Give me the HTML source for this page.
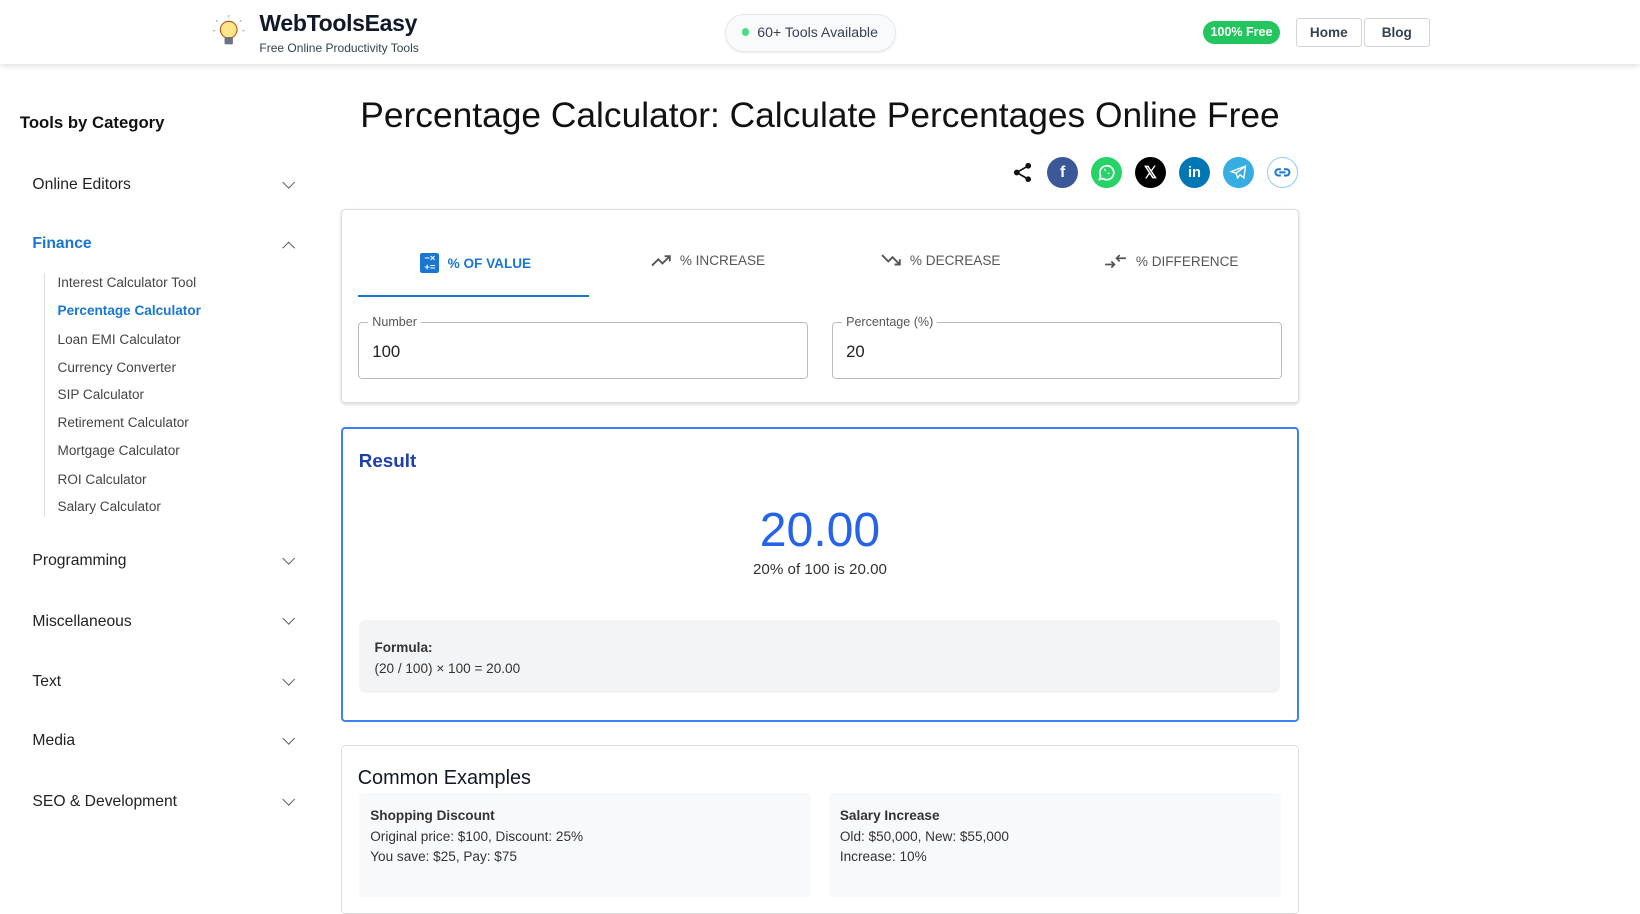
<!DOCTYPE html>
<html><head><meta charset="utf-8">
<style>
html{zoom:1.04592}
body{margin:0;width:1568px;height:818px;overflow:hidden;background:#fff;font-family:"Liberation Sans",Arial,sans-serif;color:#1f2937;position:relative}
.a{position:absolute}
.hdr{left:0;top:0;width:1568px;height:61px;background:#fff;box-shadow:0 2px 6px rgba(0,0,0,.12)}
.chev{width:8px;height:8px;border-right:1.6px solid #555;border-bottom:1.6px solid #555;transform:rotate(45deg)}
.up{transform:rotate(-135deg)}
.cat{left:31px;font-size:15px;color:#222}
.sub{left:55px;font-size:13px;color:#444}
.sic{width:30px;height:30px;border-radius:50%;top:150px;display:flex;align-items:center;justify-content:center;color:#fff;font-weight:bold;font-size:15px}
.card{background:#fff;border:1px solid #ddd;border-radius:4px;box-shadow:0 1px 3px rgba(0,0,0,.15)}
.tab{top:242px;font-size:13px;color:#555;display:flex;align-items:center;gap:8px}
.fld{border:1px solid #bbb;border-radius:4px;height:52px;top:308px}
.fld span{position:absolute;top:-8px;left:9px;background:#fff;padding:0 4px;font-size:12px;color:#555}
.fld div{position:absolute;left:13px;top:18px;font-size:16px;color:#222}
</style></head><body>
<div class="a hdr"></div>
<div class="a" style="left:203px;top:13px;width:32px;height:34px">
<svg width="32" height="34" viewBox="0 0 32 34"><g stroke="#9ca3af" stroke-width="1" stroke-dasharray="2 2"><line x1="16" y1="1" x2="16" y2="5"/><line x1="4" y1="6" x2="7" y2="9"/><line x1="28" y1="6" x2="25" y2="9"/><line x1="1" y1="16" x2="5" y2="16"/><line x1="31" y1="16" x2="27" y2="16"/></g><circle cx="16" cy="15" r="8" fill="#fde68a" stroke="#b45309" stroke-width="1"/><rect x="12" y="22" width="8" height="7" rx="1" fill="#6b7280"/></svg></div>
<div class="a" style="left:248px;top:10px;font-size:22px;font-weight:bold;color:#111827;letter-spacing:-.3px">WebToolsEasy</div>
<div class="a" style="left:248px;top:39px;font-size:11.5px;color:#374151">Free Online Productivity Tools</div>
<div class="a" style="left:693px;top:13px;width:162px;height:35px;border:1px solid #e5e7eb;border-radius:18px;background:#f9fafb;box-shadow:0 1px 2px rgba(0,0,0,.08)"></div>
<div class="a" style="left:709px;top:27px;width:7px;height:7px;border-radius:50%;background:#4ade80"></div>
<div class="a" style="left:724px;top:23px;font-size:13.5px;color:#374151">60+ Tools Available</div>
<div class="a" style="left:1150px;top:20px;width:74px;height:22px;border-radius:11px;background:#22c55e;color:#fff;font-weight:bold;font-size:12px;text-align:center;line-height:22px">100% Free</div>
<div class="a" style="left:1239px;top:17px;width:61px;height:26px;border:1px solid #d1d5db;border-radius:3px;text-align:center;line-height:26px;font-size:13px;font-weight:bold;color:#374151">Home</div>
<div class="a" style="left:1304px;top:17px;width:61px;height:26px;border:1px solid #d1d5db;border-radius:3px;text-align:center;line-height:26px;font-size:13px;font-weight:bold;color:#374151">Blog</div>

<div class="a" style="left:19px;top:108px;font-size:16px;font-weight:bold;color:#111">Tools by Category</div>
<div class="a cat" style="top:168px">Online Editors</div><div class="a chev" style="left:272px;top:170px"></div>
<div class="a cat" style="top:225px;color:#1976d2;font-weight:bold">Finance</div><div class="a chev up" style="left:272px;top:232px"></div>
<div class="a" style="left:42px;top:261px;width:1px;height:233px;background:#ddd"></div>
<div class="a sub" style="top:263px">Interest Calculator Tool</div>
<div class="a sub" style="top:290px;color:#1976d2;font-weight:bold">Percentage Calculator</div>
<div class="a sub" style="top:317px">Loan EMI Calculator</div>
<div class="a sub" style="top:344px">Currency Converter</div>
<div class="a sub" style="top:370px">SIP Calculator</div>
<div class="a sub" style="top:397px">Retirement Calculator</div>
<div class="a sub" style="top:424px">Mortgage Calculator</div>
<div class="a sub" style="top:451px">ROI Calculator</div>
<div class="a sub" style="top:477px">Salary Calculator</div>
<div class="a cat" style="top:528px">Programming</div><div class="a chev" style="left:272px;top:530px"></div>
<div class="a cat" style="top:586px">Miscellaneous</div><div class="a chev" style="left:272px;top:587px"></div>
<div class="a cat" style="top:643px">Text</div><div class="a chev" style="left:272px;top:645px"></div>
<div class="a cat" style="top:700px">Media</div><div class="a chev" style="left:272px;top:702px"></div>
<div class="a cat" style="top:758px">SEO &amp; Development</div><div class="a chev" style="left:272px;top:760px"></div>

<div class="a" style="left:326px;width:916px;top:92px;text-align:center;font-size:33.8px;color:#111">Percentage Calculator: Calculate Percentages Online Free</div>
<svg class="a" style="left:967px;top:154px" width="22" height="22" viewBox="0 0 24 24"><path fill="#111" d="M18 16.08c-.76 0-1.440.3-1.96.77L8.91 12.7c.05-.23.09-.46.09-.7s-.04-.47-.09-.7l7.05-4.11A2.99 2.99 0 1 0 15 5c0 .24.04.47.09.7L8.04 9.81A3 3 0 1 0 8.040 14.2l7.12 4.16c-.05.21-.08.43-.08.65a2.92 2.92 0 1 0 2.92-2.93z"/></svg>
<div class="a sic" style="left:1001px;background:#3b5998">f</div>
<div class="a sic" style="left:1043px;background:#25d366"><svg width="20" height="20" viewBox="0 0 24 24"><path fill="none" stroke="#fff" stroke-width="2" d="M4 20l1.3-4A8 8 0 1 1 8 19z"/><path fill="#fff" d="M9 8c1 3 3 5 6 6l1-1-2-1-1 1c-1-.5-2-1.5-2.5-2.5l1-1-1-2z"/></svg></div>
<div class="a sic" style="left:1085px;background:#000;font-size:16px">𝕏</div>
<div class="a sic" style="left:1127px;background:#0077b5;font-size:14px">in</div>
<div class="a sic" style="left:1169px;background:#37aee2"><svg width="18" height="18" viewBox="0 0 24 24"><path fill="none" stroke="#fff" stroke-width="1.8" d="M21 4L3 11l6 2 2 6 3-4 5 4zM9 13l12-9"/></svg></div>
<div class="a sic" style="left:1211px;background:#fff;border:1px solid #90caf9;width:28px;height:28px"><svg width="18" height="18" viewBox="0 0 24 24"><path fill="none" stroke="#1976d2" stroke-width="2.5" d="M10 8H7a4 4 0 0 0 0 8h3M14 8h3a4 4 0 0 1 0 8h-3M8 12h8"/></svg></div>

<div class="a card" style="left:326px;top:200px;width:914px;height:183px"></div>
<div class="a tab" style="left:402px;color:#1976d2;font-weight:bold"><span style="width:18px;height:18px;background:#1976d2;border-radius:2px;color:#fff;font-size:9px;line-height:8px;text-align:center;display:inline-block;padding-top:1px">−×<br>+=</span>% OF VALUE</div>
<div class="a tab" style="left:622px"><svg width="20" height="14" viewBox="0 0 20 14"><path fill="none" stroke="#555" stroke-width="1.8" d="M1 12l6-6 4 4 7-7M13 3h5v5"/></svg>% INCREASE</div>
<div class="a tab" style="left:842px"><svg width="20" height="14" viewBox="0 0 20 14"><path fill="none" stroke="#555" stroke-width="1.8" d="M1 2l6 6 4-4 7 7M13 11h5V6"/></svg>% DECREASE</div>
<div class="a tab" style="left:1056px"><svg width="22" height="16" viewBox="0 0 22 16"><path fill="none" stroke="#555" stroke-width="1.6" d="M1 11h8M7 8l3 3-3 3M21 5h-8M15 2l-3 3 3 3"/></svg>% DIFFERENCE</div>
<div class="a" style="left:342px;top:282px;width:221px;height:2px;background:#1976d2"></div>
<div class="a fld" style="left:342px;width:429px"><span>Number</span><div>100</div></div>
<div class="a fld" style="left:795px;width:429px"><span>Percentage (%)</span><div>20</div></div>

<div class="a" style="left:326px;top:408px;width:912px;height:278px;border:2px solid #3b82f6;border-radius:4px"></div>
<div class="a" style="left:343px;top:430px;font-size:18px;font-weight:bold;color:#1e40af">Result</div>
<div class="a" style="left:326px;width:916px;top:480px;text-align:center;font-size:46px;color:#2563eb">20.00</div>
<div class="a" style="left:326px;width:916px;top:536px;text-align:center;font-size:14.5px;color:#333">20% of 100 is 20.00</div>
<div class="a" style="left:343px;top:593px;width:881px;height:70px;background:#f3f4f6;border-radius:6px"></div>
<div class="a" style="left:358px;top:612px;font-size:13px;font-weight:bold;color:#333">Formula:</div>
<div class="a" style="left:358px;top:632px;font-size:13px;color:#333">(20 / 100) × 100 = 20.00</div>

<div class="a card" style="left:326px;top:712px;width:914px;height:160px;box-shadow:none"></div>
<div class="a" style="left:342px;top:733px;font-size:19px;color:#111827">Common Examples</div>
<div class="a" style="left:343px;top:758px;width:432px;height:100px;background:#f8f9fb;border-radius:4px"></div>
<div class="a" style="left:793px;top:758px;width:432px;height:100px;background:#f8f9fb;border-radius:4px"></div>
<div class="a" style="left:354px;top:773px;font-size:13px;font-weight:bold;color:#333">Shopping Discount</div>
<div class="a" style="left:354px;top:793px;font-size:13px;color:#333">Original price: $100, Discount: 25%</div>
<div class="a" style="left:354px;top:812px;font-size:13px;color:#333">You save: $25, Pay: $75</div>
<div class="a" style="left:803px;top:773px;font-size:13px;font-weight:bold;color:#333">Salary Increase</div>
<div class="a" style="left:803px;top:793px;font-size:13px;color:#333">Old: $50,000, New: $55,000</div>
<div class="a" style="left:803px;top:812px;font-size:13px;color:#333">Increase: 10%</div>
</body></html>
